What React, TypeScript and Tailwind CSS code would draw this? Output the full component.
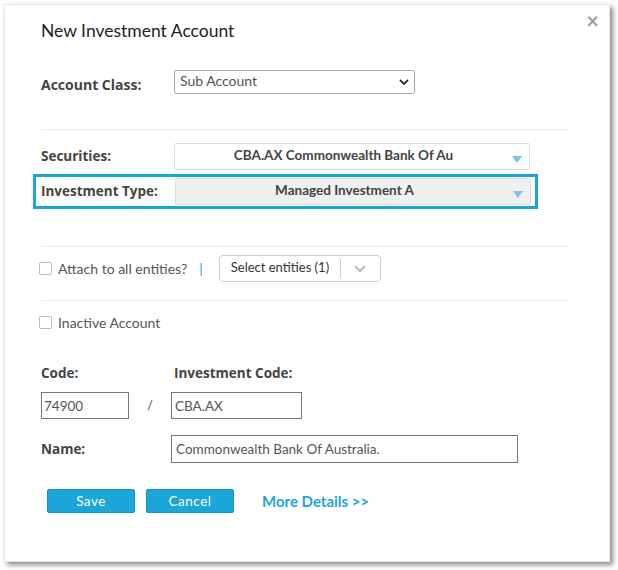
import React from 'react'

const FONT = { fontFamily: 'Lato, "Open Sans", Arial, sans-serif' }
const LABEL = { fontFamily: '"Open Sans", Lato, Arial, sans-serif' }

function Caret() {
  return (
    <svg width="10" height="7" viewBox="0 0 10 7" className="shrink-0">
      <path d="M0 0 L10 0 L5 7 Z" fill="#7cc3e6" />
    </svg>
  )
}

function Chevron({ color = '#333', w = 10 }: { color?: string; w?: number }) {
  return (
    <svg width={w} height={w * 0.6} viewBox="0 0 10 6">
      <path d="M1 1 L5 5 L9 1" fill="none" stroke={color} strokeWidth="1.8" />
    </svg>
  )
}

function Checkbox({ label }: { label: string }) {
  return (
    <label className="flex items-center gap-[6px] text-[14px] text-[#555]">
      <span className="w-[13px] h-[13px] border border-[#bbb] rounded-[2px] bg-white" />
      {label}
    </label>
  )
}

function Label({ children, className = '' }: { children: React.ReactNode; className?: string }) {
  return (
    <div className={`text-[13.5px] font-bold text-[#444] ${className}`} style={LABEL}>
      {children}
    </div>
  )
}

export default function App() {
  return (
    <div className="w-[618px] h-[570px] bg-white pt-[4px] pl-[4px]" style={FONT}>
      <div className="relative w-[606px] h-[558px] bg-white border border-[#e6e6e6] shadow-[3px_3px_5px_rgba(0,0,0,0.45)] pl-[36px] pr-[41px] pt-[15px]">
        <button className="absolute right-[10px] top-[5px] text-[#a0a0a0] text-[22px] font-bold leading-none">×</button>

        <h2 className="text-[17.5px] leading-[22px] text-[#222] font-normal">New Investment Account</h2>

        {/* Account class */}
        <div className="flex items-center mt-[28px] h-[24px]">
          <Label className="w-[133px] pt-[4px] text-[14px]">Account Class:</Label>
          <div className="w-[241px] h-[24px] border border-[#a9a9a9] rounded-[2px] flex items-center justify-between px-[5px] text-[14px] text-[#555]">
            <span className="-mt-[3px]">Sub Account</span>
            <Chevron />
          </div>
        </div>

        <div className="h-px bg-[#ececec] mt-[35px]" />

        {/* Securities */}
        <div className="flex items-center mt-[13px] h-[27px]">
          <Label className="w-[133px]">Securities:</Label>
          <div className="w-[356px] h-[27px] border border-[#ddd] rounded-[2px] bg-white flex items-center pr-[7px] text-[13.5px] font-bold text-[#444]">
            <span className="flex-1 text-center -mt-[2px]">CBA.AX Commonwealth Bank Of Au</span>
            <span className="mt-[5px]"><Caret /></span>
          </div>
        </div>

        {/* Investment type (highlighted) */}
        <div className="-ml-[8px] mt-[4px] w-[505px] h-[35px] border-[3px] border-[#1aa4d7] flex items-center pl-[5px]">
          <Label className="w-[134px]">Investment Type:</Label>
          <div className="w-[356px] h-[27px] border border-[#ddd] rounded-[2px] bg-[#eff0ef] flex items-center pr-[7px] text-[13.5px] font-bold text-[#444]">
            <span className="flex-1 text-center -mt-[2px]">Managed Investment A</span>
            <span className="mt-[5px]"><Caret /></span>
          </div>
        </div>

        <div className="h-px bg-[#ececec] mt-[37px]" />

        {/* Entities */}
        <div className="flex items-center mt-[8px] h-[27px] -ml-[2px]">
          <Checkbox label="Attach to all entities?" />
          <span className="ml-[12px] text-[#1aa4d7] text-[14px]">|</span>
          <div className="ml-[16px] w-[162px] h-[27px] border border-[#ccc] rounded-[4px] flex items-center text-[13px] text-[#333]">
            <span className="pl-[11px] w-[120px] -mt-[2px]">Select entities (1)</span>
            <span className="w-px h-[19px] bg-[#ccc]" />
            <span className="flex-1 flex justify-center"><Chevron color="#bbb" w={12} /></span>
          </div>
        </div>

        <div className="h-px bg-[#ececec] mt-[18px]" />

        <div className="mt-[11px] -ml-[2px]">
          <Checkbox label="Inactive Account" />
        </div>

        {/* Codes */}
        <div className="flex mt-[30px]">
          <Label className="w-[133px]">Code:</Label>
          <Label>Investment Code:</Label>
        </div>
        <div className="flex items-center mt-[9px]">
          <input readOnly value="74900" className="w-[88px] h-[27px] border border-[#777] px-[2px] text-[13.5px] text-[#555] outline-none" />
          <span className="w-[42px] text-center text-[13px] text-[#555]">/</span>
          <input readOnly value="CBA.AX" className="w-[131px] h-[27px] border border-[#777] px-[3px] text-[13.5px] text-[#555] outline-none" />
        </div>

        <div className="flex items-center mt-[16px]">
          <Label className="w-[130px]">Name:</Label>
          <input readOnly value="Commonwealth Bank Of Australia." className="w-[347px] h-[28px] border border-[#777] px-[4px] text-[13.5px] text-[#555] outline-none" />
        </div>

        {/* Actions */}
        <div className="flex items-center mt-[26px] ml-[6px]">
          <button className="w-[88px] h-[24px] bg-[#1ba5d8] border border-[#1592c2] rounded-[2px] text-white text-[13.5px] tracking-[0.5px]">Save</button>
          <button className="ml-[11px] w-[88px] h-[24px] bg-[#1ba5d8] border border-[#1592c2] rounded-[2px] text-white text-[13.5px] tracking-[0.5px]">Cancel</button>
          <a className="ml-[28px] text-[15px] font-bold text-[#1ba5d8]">More Details &gt;&gt;</a>
        </div>
      </div>
    </div>
  )
}
